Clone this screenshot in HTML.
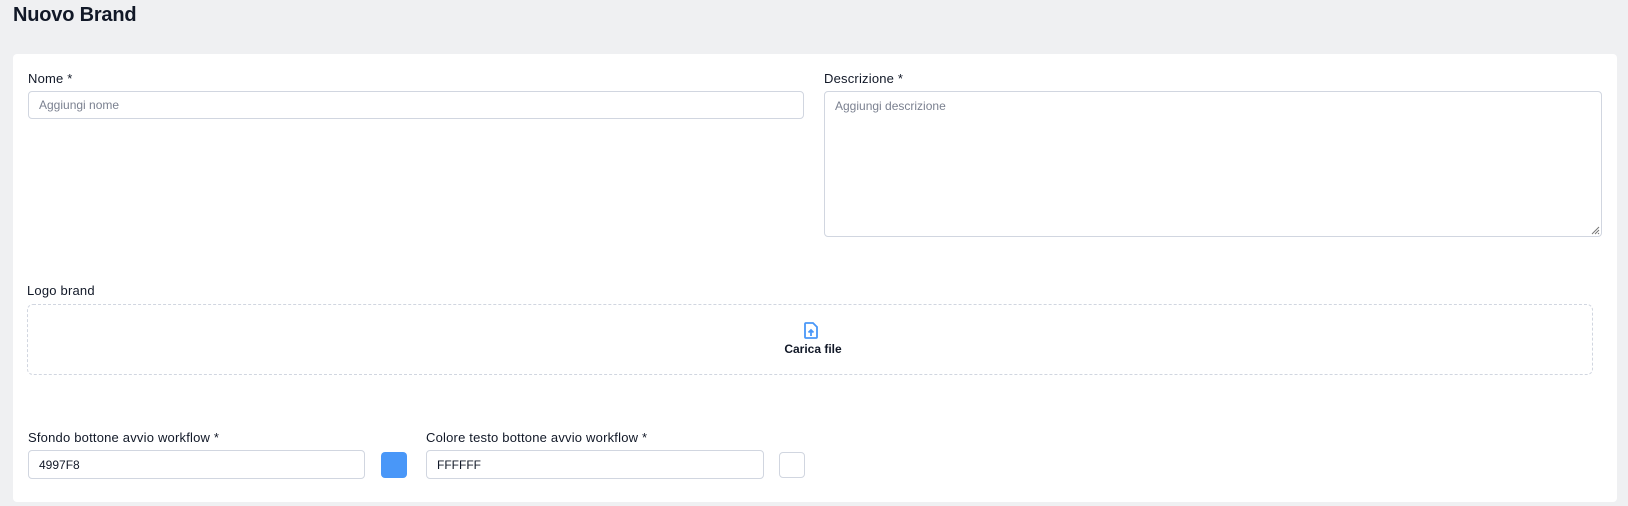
<!DOCTYPE html>
<html><head><meta charset="utf-8"><style>
*{box-sizing:border-box;margin:0;padding:0}
body{width:1628px;height:506px;background:#eff0f2;font-family:"Liberation Sans",sans-serif;color:#111827;position:relative;overflow:hidden}
.a{position:absolute}
h1{position:absolute;left:13px;top:4px;font-size:20px;font-weight:bold;color:#111827;letter-spacing:-0.2px}
.card{position:absolute;left:13px;top:54px;width:1604px;height:448px;background:#fff;border-radius:4px}
.lbl{position:absolute;font-size:13px;color:#111827;letter-spacing:0.2px}
.inp{position:absolute;border:1px solid #d1d6e0;border-radius:4px;background:#fff;font-size:12px;padding-left:10px;display:flex;align-items:center}
.ph{color:#7b8190}
</style></head><body>
<h1>Nuovo Brand</h1>
<div class="card"></div>
<div class="lbl" style="left:28px;top:71px">Nome *</div>
<div class="inp ph" style="left:28px;top:91px;width:776px;height:28px">Aggiungi nome</div>
<div class="lbl" style="left:824px;top:71px">Descrizione *</div>
<div class="inp ph" style="left:824px;top:91px;width:778px;height:146px;align-items:flex-start;padding-top:7px">Aggiungi descrizione</div>
<svg class="a" style="left:1591px;top:226px" width="9" height="9"><path d="M8 1L1 8M8 4L4 8M8 7L7 8" stroke="#777" stroke-width="1"/></svg>
<div class="lbl" style="left:27px;top:283px">Logo brand</div>
<div class="a" style="left:27px;top:304px;width:1566px;height:71px;border:1px dashed #d1d6e0;border-radius:6px"></div>
<svg class="a" style="left:804px;top:322px" width="14" height="17" viewBox="0 0 14 17"><path d="M2 1H9L13 5V15a1 1 0 0 1-1 1H2a1 1 0 0 1-1-1V2a1 1 0 0 1 1-1z" fill="none" stroke="#4997f8" stroke-width="1.8"/><path d="M7 14V8M4.5 10.5L7 8l2.5 2.5" fill="none" stroke="#4997f8" stroke-width="1.8"/></svg>
<div class="a" style="left:763px;top:342px;width:100px;text-align:center;font-size:12px;font-weight:bold">Carica file</div>
<div class="lbl" style="left:28px;top:430px">Sfondo bottone avvio workflow *</div>
<div class="inp" style="left:28px;top:450px;width:337px;height:29px">4997F8</div>
<div class="a" style="left:381px;top:452px;width:26px;height:26px;background:#4997f8;border-radius:4px"></div>
<div class="lbl" style="left:426px;top:430px">Colore testo bottone avvio workflow *</div>
<div class="inp" style="left:426px;top:450px;width:338px;height:29px">FFFFFF</div>
<div class="a" style="left:779px;top:452px;width:26px;height:26px;background:#fff;border:1px solid #d1d6e0;border-radius:4px"></div>
</body></html>
